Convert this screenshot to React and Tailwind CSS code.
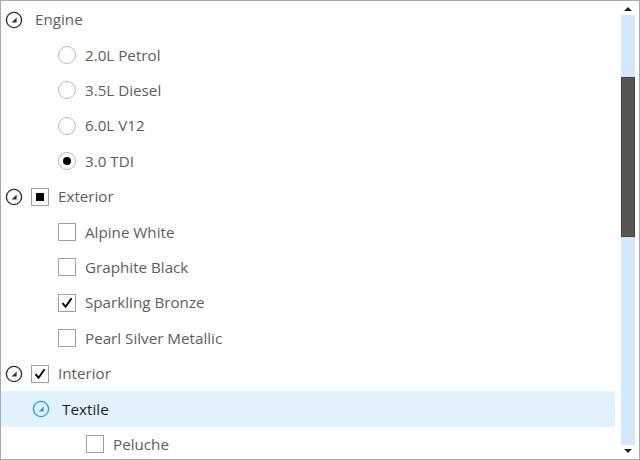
import React from 'react'

const ROWS = [
  { level: 0, kind: 'expander', label: 'Engine' },
  { level: 2, kind: 'radio', label: '2.0L Petrol' },
  { level: 2, kind: 'radio', label: '3.5L Diesel' },
  { level: 2, kind: 'radio', label: '6.0L V12' },
  { level: 2, kind: 'radio', label: '3.0 TDI', checked: true },
  { level: 0, kind: 'expander', check: 'partial', label: 'Exterior' },
  { level: 2, kind: 'check', label: 'Alpine White' },
  { level: 2, kind: 'check', label: 'Graphite Black' },
  { level: 2, kind: 'check', label: 'Sparkling Bronze', checked: true },
  { level: 2, kind: 'check', label: 'Pearl Silver Metallic' },
  { level: 0, kind: 'expander', check: 'checked', label: 'Interior' },
  { level: 1, kind: 'expander', label: 'Textile', selected: true },
  { level: 3, kind: 'check', label: 'Peluche' },
]

const PAD = ['pl-[3px]', 'pl-[30px]', 'pl-[57px]', 'pl-[85px]']

function Expander({ active }) {
  const c = active ? '#2a9fd8' : '#333333'
  return (
    <svg width="20" height="20" viewBox="0 0 20 20" className="shrink-0">
      <circle cx="10" cy="10" r="7.6" fill="none" stroke={c} strokeWidth="1.4" />
      <path d="M12.6 7.6 L12.6 12.6 L7.6 12.6 Z" fill={c} />
    </svg>
  )
}

function Radio({ checked }) {
  return (
    <span className="w-[18px] h-[18px] rounded-full border border-[#b8b8b8] bg-white flex items-center justify-center shrink-0">
      {checked && <span className="w-[8px] h-[8px] rounded-full bg-black" />}
    </span>
  )
}

function Box({ state }) {
  return (
    <span className="w-[18px] h-[18px] border border-[#a0a0a0] bg-white flex items-center justify-center shrink-0">
      {state === 'partial' && <span className="w-[8px] h-[8px] bg-black" />}
      {state === 'checked' && (
        <svg width="14" height="14" viewBox="0 0 14 14">
          <path d="M2.5 7.2 L5.6 10.8 L11.6 2.2" fill="none" stroke="#000" strokeWidth="1.9" />
        </svg>
      )}
    </span>
  )
}

export default function App() {
  return (
    <div className="w-[640px] h-[460px] bg-white border border-[#a9a9a9] flex overflow-hidden font-['Open_Sans','Noto_Sans',sans-serif]">
      <div className="flex-1 pt-[1px]">
        {ROWS.map((r, i) => (
          <div
            key={i}
            className={`h-[35.4px] flex items-center ${PAD[r.level]} ${r.selected ? 'bg-[#e1f2fc] mr-[4px]' : ''}`}
          >
            {r.kind === 'expander' && <Expander active={r.selected} />}
            {r.check && <span className="w-[7px]" />}
            {r.check && <Box state={r.check} />}
            {r.kind === 'radio' && <Radio checked={r.checked} />}
            {r.kind === 'check' && <Box state={r.checked ? 'checked' : null} />}
            <span
              className={`${r.kind === 'expander' && !r.check ? 'ml-[11px]' : 'ml-[9px]'} ${
                r.selected ? 'text-[#1e1e1e] text-[15.3px]' : 'text-[#5c5c5c] text-[15.2px]'
              }`}
            >
              {r.label}
            </span>
          </div>
        ))}
      </div>
      <div className="w-[18px] mr-[2px] flex flex-col items-center">
        <svg width="10" height="12" viewBox="0 0 10 12" className="mt-[2px]">
          <path d="M1 8 L5 4 L9 8 Z" fill="#222" />
        </svg>
        <div className="w-[14px] flex-1 flex flex-col bg-[#d3e8f8]">
          <div className="h-[62px]" />
          <div className="h-[160px] bg-[#575754] border border-[#3f3f3d]" />
        </div>
        <svg width="10" height="12" viewBox="0 0 10 12" className="mb-[2px]">
          <path d="M1 4 L5 8 L9 4 Z" fill="#222" />
        </svg>
      </div>
    </div>
  )
}
